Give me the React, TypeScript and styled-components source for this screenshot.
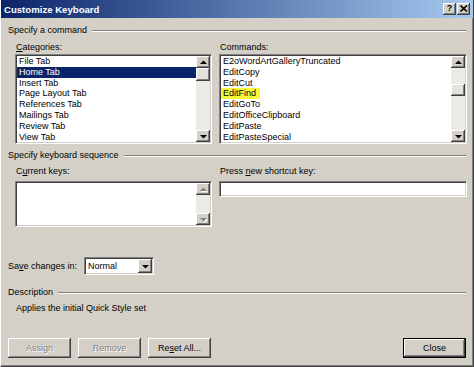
import React from 'react';
import styled, { createGlobalStyle } from 'styled-components';

const Global = createGlobalStyle`
  html, body { margin: 0; padding: 0; background: #d4d0c8; }
  body { font-family: "Liberation Sans", Arial, sans-serif; }
`;

const Window = styled.div`
  width: 474px;
  height: 367px;
  box-sizing: border-box;
  background: #d4d0c8;
  border-left: 1px solid #ffffff;
  border-right: 1px solid #404040;
  border-bottom: 1px solid #404040;
  box-shadow: inset -1px -1px 0 #808080;
  display: flex;
  flex-direction: column;
  color: #000;
  font-family: "Liberation Sans", Arial, sans-serif;
  font-size: 9px;
  line-height: 11px;
  overflow: hidden;
`;

const TitleBar = styled.div`
  height: 18px;
  flex: none;
  display: flex;
  align-items: center;
  padding: 0 3px 0 3px;
  background: linear-gradient(to right, #0a246a, #a6caf0);
`;

const Title = styled.div`
  flex: 1;
  color: #fff;
  font-weight: bold;
  font-size: 9.6px;
`;

const CaptionButton = styled.div`
  width: 13px;
  height: 12px;
  box-sizing: border-box;
  background: #d4d0c8;
  box-shadow: inset -1px -1px 0 #404040, inset 1px 1px 0 #fff, inset -2px -2px 0 #808080;
  display: flex;
  align-items: center;
  justify-content: center;
  font-weight: bold;
  font-size: 9px;
  line-height: 9px;
  padding-bottom: 1px;
  & + & { margin-left: 1px; }
`;

const Body = styled.div`
  flex: 1;
  display: flex;
  flex-direction: column;
  padding: 0 7px 0 7px;
`;

const GroupHeader = styled.div<{ $top: number }>`
  display: flex;
  align-items: center;
  height: 11px;
  margin-top: ${(p) => p.$top}px;
`;

const Rule = styled.div`
  flex: 1;
  margin-left: 5px;
  height: 0;
  border-top: 1px solid #808080;
  border-bottom: 1px solid #ffffff;
`;

const Columns = styled.div<{ $top: number }>`
  display: grid;
  grid-template-columns: 197px 248px;
  column-gap: 7px;
  align-items: start;
  padding-left: 7px;
  margin-top: ${(p) => p.$top}px;
`;

const FieldLabel = styled.div`
  height: 11px;
  padding-left: 1px;
  white-space: nowrap;
`;

const U = styled.span`
  text-decoration: underline;
`;

const Sunken = styled.div<{ $h: number }>`
  height: ${(p) => p.$h}px;
  box-sizing: border-box;
  background: #fff;
  border: 1px solid;
  border-color: #808080 #ffffff #ffffff #808080;
  box-shadow: inset 1px 1px 0 #404040, inset -1px -1px 0 #d4d0c8;
  padding: 1px;
  display: flex;
  overflow: hidden;
`;

const Items = styled.div`
  flex: 1;
  min-width: 0;
`;

const Item = styled.div<{ $selected?: boolean }>`
  height: 10.8px;
  line-height: 10.8px;
  white-space: nowrap;
  background: ${(p) => (p.$selected ? '#0a246a' : 'transparent')};
  color: ${(p) => (p.$selected ? '#fff' : '#000')};
`;

const ItemText = styled.span<{ $mark?: boolean }>`
  display: inline-block;
  padding: 0 4px 0 2px;
  background: ${(p) => (p.$mark ? '#f8f83a' : 'transparent')};
`;

const ScrollBar = styled.div`
  width: 14px;
  flex: none;
  display: flex;
  flex-direction: column;
  background: #ebeae6;
`;

const Bevel = styled.div`
  box-sizing: border-box;
  background: #d4d0c8;
  box-shadow: inset -1px -1px 0 #404040, inset 1px 1px 0 #fff, inset -2px -2px 0 #808080;
`;

const ArrowButton = styled(Bevel)`
  height: 12px;
  flex: none;
  display: flex;
  align-items: center;
  justify-content: center;
`;

const Track = styled.div`
  flex: 1;
`;

const Thumb = styled(Bevel)<{ $top: number; $h: number }>`
  margin-top: ${(p) => p.$top}px;
  height: ${(p) => p.$h}px;
  background: #e4e2dc;
`;

const Arrow = ({ down, disabled }: { down?: boolean; disabled?: boolean }) => (
  <svg width="7" height="5" viewBox="0 0 7 5">
    {disabled && (
      <polygon
        points={down ? '1,2 8,2 4.5,5.5' : '1,5 8,5 4.5,1.5'}
        fill="#ffffff"
      />
    )}
    <polygon
      points={down ? '0,1 7,1 3.5,4.5' : '0,4 7,4 3.5,0.5'}
      fill={disabled ? '#808080' : '#000'}
    />
  </svg>
);

const VScroll = ({
  thumbTop,
  thumbH,
  disabled,
}: {
  thumbTop?: number;
  thumbH?: number;
  disabled?: boolean;
}) => (
  <ScrollBar>
    <ArrowButton>
      <Arrow disabled={disabled} />
    </ArrowButton>
    <Track>{thumbH ? <Thumb $top={thumbTop ?? 0} $h={thumbH} /> : null}</Track>
    <ArrowButton>
      <Arrow down disabled={disabled} />
    </ArrowButton>
  </ScrollBar>
);

const SaveRow = styled.div`
  display: flex;
  align-items: center;
  margin-top: 30px;
  height: 18px;
`;

const Select = styled.div`
  margin-left: 7px;
  width: 70px;
  height: 18px;
  box-sizing: border-box;
  background: #fff;
  border: 1px solid;
  border-color: #808080 #ffffff #ffffff #808080;
  box-shadow: inset 1px 1px 0 #404040, inset -1px -1px 0 #d4d0c8;
  padding: 1px;
  display: flex;
  align-items: stretch;
`;

const SelectValue = styled.div`
  flex: 1;
  padding-left: 2px;
  display: flex;
  align-items: center;
`;

const SelectButton = styled(Bevel)`
  width: 14px;
  display: flex;
  align-items: center;
  justify-content: center;
`;

const Description = styled.div`
  margin-top: 5px;
  padding-left: 8px;
  height: 11px;
`;

const ButtonRow = styled.div`
  display: flex;
  gap: 7px;
  margin-top: 24px;
`;

const Button = styled.div<{ $disabled?: boolean; $default?: boolean; $push?: boolean }>`
  width: 63px;
  height: 20px;
  box-sizing: border-box;
  background: #d4d0c8;
  display: flex;
  align-items: center;
  justify-content: center;
  margin-left: ${(p) => (p.$push ? 'auto' : '0')};
  color: ${(p) => (p.$disabled ? '#808080' : '#000')};
  text-shadow: ${(p) => (p.$disabled ? '1px 1px 0 #ffffff' : 'none')};
  border: ${(p) => (p.$default ? '1px solid #000' : 'none')};
  box-shadow: inset -1px -1px 0 #404040, inset 1px 1px 0 #fff, inset -2px -2px 0 #808080;
`;

const categories = [
  'File Tab',
  'Home Tab',
  'Insert Tab',
  'Page Layout Tab',
  'References Tab',
  'Mailings Tab',
  'Review Tab',
  'View Tab',
];

const commands = [
  'E2oWordArtGalleryTruncated',
  'EditCopy',
  'EditCut',
  'EditFind',
  'EditGoTo',
  'EditOfficeClipboard',
  'EditPaste',
  'EditPasteSpecial',
];

export default function App() {
  return (
    <>
      <Global />
      <Window>
        <TitleBar>
          <Title>Customize Keyboard</Title>
          <CaptionButton>?</CaptionButton>
          <CaptionButton>
            <svg width="8" height="7" viewBox="0 0 8 7">
              <path d="M0.5 0.5 L7 6.5 M7 0.5 L0.5 6.5" stroke="#000" strokeWidth="1.6" />
            </svg>
          </CaptionButton>
        </TitleBar>
        <Body>
          <GroupHeader $top={7}>
            Specify a command
            <Rule />
          </GroupHeader>
          <Columns $top={6}>
            <FieldLabel>
              <U>C</U>ategories:
            </FieldLabel>
            <FieldLabel>Commands:</FieldLabel>
          </Columns>
          <Columns $top={1}>
            <Sunken $h={90}>
              <Items>
                {categories.map((c, i) => (
                  <Item key={c} $selected={i === 1}>
                    <ItemText>{c}</ItemText>
                  </Item>
                ))}
              </Items>
              <VScroll thumbTop={0} thumbH={13} />
            </Sunken>
            <Sunken $h={90}>
              <Items>
                {commands.map((c) => (
                  <Item key={c}>
                    <ItemText $mark={c === 'EditFind'}>{c}</ItemText>
                  </Item>
                ))}
              </Items>
              <VScroll thumbTop={16} thumbH={12} />
            </Sunken>
          </Columns>
          <GroupHeader $top={6}>
            Specify keyboard sequence
            <Rule />
          </GroupHeader>
          <Columns $top={5}>
            <FieldLabel>
              C<U>u</U>rrent keys:
            </FieldLabel>
            <FieldLabel>
              Press <U>n</U>ew shortcut key:
            </FieldLabel>
          </Columns>
          <Columns $top={4}>
            <Sunken $h={46}>
              <Items />
              <VScroll disabled />
            </Sunken>
            <Sunken $h={16} />
          </Columns>
          <SaveRow>
            Sa<U>v</U>e changes in:
            <Select>
              <SelectValue>Normal</SelectValue>
              <SelectButton>
                <Arrow down />
              </SelectButton>
            </Select>
          </SaveRow>
          <GroupHeader $top={12}>
            Description
            <Rule />
          </GroupHeader>
          <Description>Applies the initial Quick Style set</Description>
          <ButtonRow>
            <Button $disabled>Assign</Button>
            <Button $disabled>Remove</Button>
            <Button>
              Re<U>s</U>et All...
            </Button>
            <Button $default $push>
              Close
            </Button>
          </ButtonRow>
        </Body>
      </Window>
    </>
  );
}
